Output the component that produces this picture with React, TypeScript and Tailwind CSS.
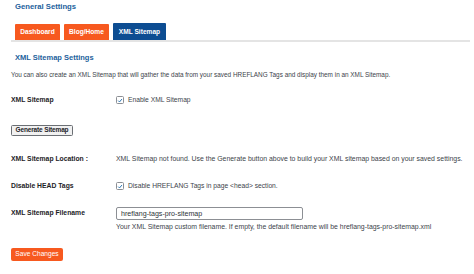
import React from "react";

const Check = ({ label }: { label: string }) => (
  <div className="flex items-center gap-[4px]">
    <span className="w-[8px] h-[8px] rounded-[1.5px] border border-[#8c8f94] bg-white flex items-center justify-center">
      <svg width="7" height="7" viewBox="0 0 10 10">
        <path d="M2 5.2 L4.2 7.4 L8.2 2.6" fill="none" stroke="#2271b1" strokeWidth="1.6" />
      </svg>
    </span>
    <span className="text-[6.7px] text-[#3c434a]">{label}</span>
  </div>
);

const Row = ({ label, children, className = "" }: { label: string; children: React.ReactNode; className?: string }) => (
  <div className={`flex items-center h-[10px] ${className}`}>
    <div className="w-[105px] text-[6.8px] font-bold text-[#1d2327]">{label}</div>
    <div className="flex-1">{children}</div>
  </div>
);

const App = () => {
  return (
    <div className="w-[474px] h-[274px] overflow-hidden bg-white pl-[11px] pt-[2px] text-[6.4px] font-['Liberation_Sans',Arial,sans-serif] text-[#3c434a]">
      {/* header */}
      <h1 className="ml-[4px] h-[10px] leading-[10px] text-[7.7px] font-bold text-[#1d5f9c]">General Settings</h1>

      {/* tabs */}
      <div className="mt-[11px] mr-[4px] flex items-end gap-[4px] pl-[4px] border-b-2 border-[#e4e4e4]">
        <button className="w-[45px] h-[16px] rounded-t-[1px] bg-[#f7591f] text-[6.6px] text-white font-bold">Dashboard</button>
        <button className="w-[45px] h-[16px] rounded-t-[1px] bg-[#f7591f] text-[6.6px] text-white font-bold">Blog/Home</button>
        <button className="w-[53px] h-[17px] rounded-t-[1px] bg-[#0d4d92] text-[6.6px] text-white font-bold">XML Sitemap</button>
      </div>

      <h2 className="mt-[11px] ml-[4px] h-[10px] leading-[10px] text-[7.5px] font-bold text-[#1d5f9c]">XML Sitemap Settings</h2>
      <p className="mt-[8px] h-[8px] leading-[8px] text-[#3c434a]">
        You can also create an XML Sitemap that will gather the data from your saved HREFLANG Tags and display them in an XML Sitemap.
      </p>

      <Row label="XML Sitemap" className="mt-[16px]">
        <Check label="Enable XML Sitemap" />
      </Row>

      <button className="mt-[20px] w-[62px] h-[11px] px-0 whitespace-nowrap border border-[#6b6f74] rounded-[1.5px] bg-[#f1f1f1] text-[6.5px] tracking-[-0.15px] font-bold text-[#1d2327] leading-none">
        Generate Sitemap
      </button>

      <Row label="XML Sitemap Location :" className="mt-[18px]">
        <span className="text-[6.9px]">XML Sitemap not found. Use the Generate button above to build your XML sitemap based on your saved settings.</span>
      </Row>

      <Row label="Disable HEAD Tags" className="mt-[17px]">
        <Check label="Disable HREFLANG Tags in page <head> section." />
      </Row>

      <div className="mt-[16px] flex items-center">
        <div className="w-[105px] text-[6.8px] font-bold text-[#1d2327]">XML Sitemap Filename</div>
        <input
          readOnly
          value="hreflang-tags-pro-sitemap"
          className="w-[187px] h-[13px] px-[4px] border border-[#8c8f94] rounded-[2px] text-[7.1px] text-[#2c3338] outline-none"
        />
      </div>
      <p className="mt-[3px] ml-[105px] h-[8px] leading-[8px] text-[6.9px]">
        Your XML Sitemap custom filename. If empty, the default filename will be hreflang-tags-pro-sitemap.xml
      </p>

      <button className="mt-[17px] w-[52px] h-[13px] rounded-[2px] bg-[#f7591f] text-[6.6px] text-white leading-none">Save Changes</button>
    </div>
  );
};

export default App;
